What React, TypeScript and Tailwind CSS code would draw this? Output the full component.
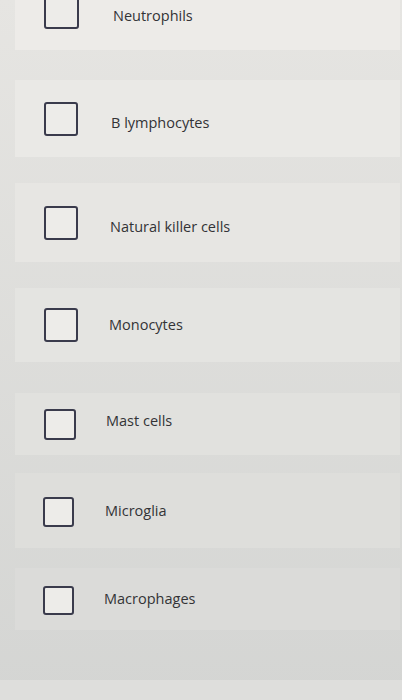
const options = [
  { label: "Neutrophils", row: "h-[80px] -mt-[30px] mb-[30px] bg-[#edebe8]", box: "w-[35px] h-[34px] ml-[29px] mt-[4px]", text: "ml-[34px] mt-[12px]" },
  { label: "B lymphocytes", row: "h-[77px] mb-[26px] bg-[#eae9e6]", box: "w-[34px] h-[34px] ml-[29px]", text: "ml-[33px] mt-[8px]" },
  { label: "Natural killer cells", row: "h-[79px] mb-[26px] bg-[#e7e6e3]", box: "w-[34px] h-[34px] ml-[29px]", text: "ml-[32px] mt-[8px]" },
  { label: "Monocytes", row: "h-[74px] mb-[31px] bg-[#e4e4e1]", box: "w-[34px] h-[34px] ml-[29px]", text: "ml-[31px]" },
  { label: "Mast cells", row: "h-[62px] mb-[18px] bg-[#e1e1de]", box: "w-[32px] h-[31px] ml-[29px]", text: "ml-[30px] -mt-[6px]" },
  { label: "Microglia", row: "h-[75px] mb-[20px] bg-[#dededb]", box: "w-[31px] h-[30px] ml-[28px] mt-[3px]", text: "ml-[31px]" },
  { label: "Macrophages", row: "h-[62px] mb-[50px] bg-[#dbdbd9]", box: "w-[31px] h-[29px] ml-[28px] mt-[3px]", text: "ml-[30px]" },
];

export default function App() {
  return (
    <div
      className="w-[402px] h-[700px] overflow-hidden bg-linear-to-b from-[#e6e5e2] to-[#d4d5d3] pl-[15px] pr-[2px] text-[#333336]"
      style={{ fontFamily: "'Open Sans', Lato, sans-serif" }}
    >
      <div className="flex flex-col">
        {options.map((o) => (
          <label key={o.label} className={`flex items-center ${o.row}`}>
            <span
              className={`shrink-0 rounded-[3px] border-2 border-[#3a3b4c] bg-[#edece9] ${o.box}`}
            />
            <span className={`text-[14.5px] ${o.text}`}>{o.label}</span>
          </label>
        ))}
        <div className="h-[20px] bg-[#dededc] -ml-[15px] -mr-[2px]" />
      </div>
    </div>
  );
}
